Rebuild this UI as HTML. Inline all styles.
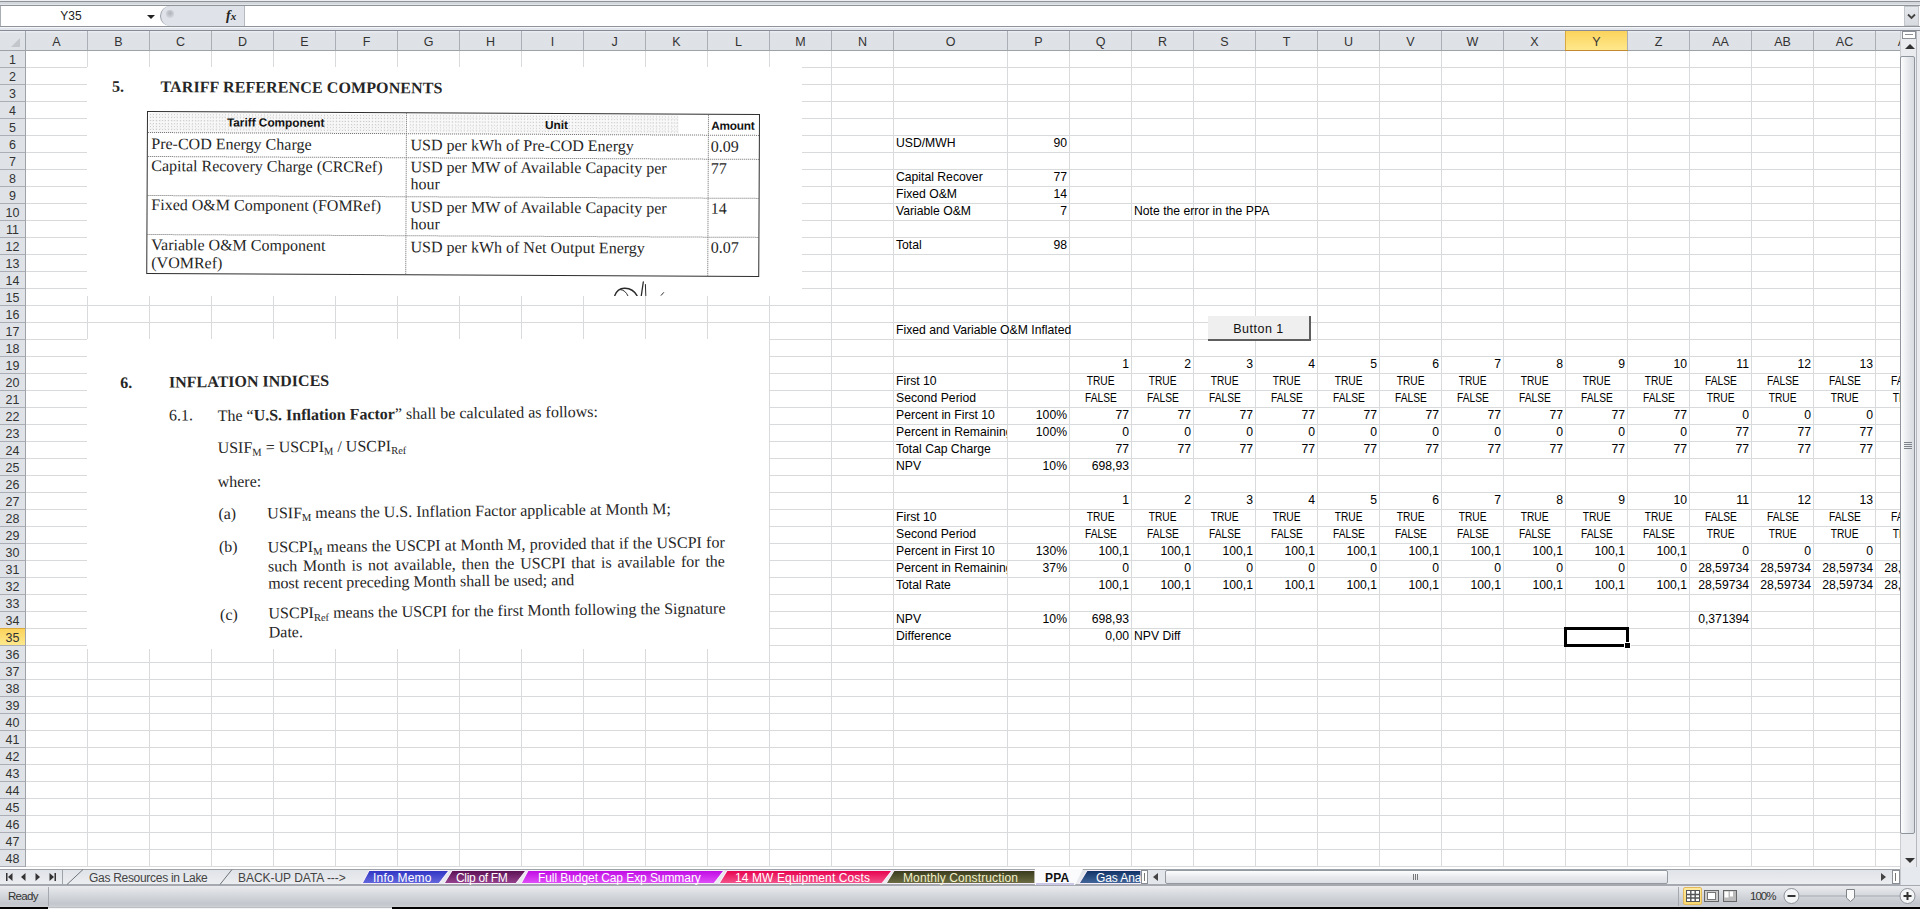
<!DOCTYPE html><html><head><meta charset="utf-8"><style>
*{margin:0;padding:0;box-sizing:border-box}
html,body{width:1920px;height:909px;overflow:hidden;background:#fff;font-family:"Liberation Sans", sans-serif;position:relative}
.a{position:absolute}
.c{position:absolute;height:16px;line-height:16px;font-size:12.2px;color:#000;white-space:nowrap;overflow:hidden}
.r{text-align:right;padding-right:2px}
.l{text-align:left;padding-left:2px}
.m{text-align:center}
.hd{position:absolute;font-size:12.5px;color:#333;text-align:center;line-height:19px;top:33px;height:17px;overflow:visible}
.rh{position:absolute;left:0;width:25px;font-size:12.5px;color:#333;text-align:center;line-height:17px;height:16px}


.doc{position:absolute;background:#fff;overflow:hidden}
.rot{position:absolute;left:0;top:0;width:1920px;height:909px}
.t{position:absolute;white-space:nowrap;font-family:'Liberation Serif',serif;font-size:16px;color:#262626;line-height:18px}
.b{font-weight:bold}
.tb{position:absolute;white-space:nowrap;font-family:'Liberation Sans',sans-serif;font-size:11.8px;font-weight:bold;color:#111;line-height:14px}
sub.s{font-size:10.5px;vertical-align:baseline;position:relative;top:3px}
.cp{display:inline-block;transform:scaleX(.84);transform-origin:50% 50%}


.tt{position:absolute;top:870px;height:16px;line-height:17px;font-size:12px;white-space:nowrap;color:#444}
</style></head><body><div class="a" style="left:0;top:0;width:1920px;height:31px;background:#e6e9ed"></div>
<div class="a" style="left:0;top:0;width:1920px;height:1px;background:#eceef1"></div>
<div class="a" style="left:0;top:1px;width:1920px;height:1px;background:#8e9399"></div>
<div class="a" style="left:0;top:2px;width:1920px;height:2px;background:#d4d7db"></div>
<div class="a" style="left:0;top:4px;width:1920px;height:1px;background:#e3e6e9"></div>
<div class="a" style="left:0;top:5px;width:1920px;height:1px;background:#8f949a"></div>
<div class="a" style="left:0;top:6px;width:1920px;height:20px;background:#fff"></div>
<div class="a" style="left:0;top:26px;width:1920px;height:1px;background:#8f949a"></div>
<div class="a" style="left:0;top:27px;width:1920px;height:1px;background:#f5f6f8"></div>
<div class="a" style="left:0;top:28px;width:1920px;height:2px;background:#e2e5ec"></div>
<div class="a" style="left:0;top:30px;width:1920px;height:1px;background:#878c94"></div>
<div class="a" style="left:0;top:6px;width:1px;height:20px;background:#a9aeb4"></div>
<div class="a" style="left:0;top:6px;width:160px;height:20px;line-height:20px;font-size:12px;color:#222;text-align:center;padding-right:18px">Y35</div>
<div class="a" style="left:147px;top:15px;width:0;height:0;border-left:4px solid transparent;border-right:4px solid transparent;border-top:4px solid #222"></div>
<div class="a" style="left:160px;top:6px;width:85px;height:20px;background:#dfe2e8;border-radius:10px 0 0 10px;border-left:1px solid #9aa0a8"></div>
<div class="a" style="left:244px;top:6px;width:1px;height:20px;background:#b5bac1"></div>
<div class="a" style="left:166px;top:10px;width:8px;height:8px;border-radius:50%;background:radial-gradient(circle at 50% 40%,#b0b4ba,#dfe2e8)"></div>
<div class="a" style="left:226px;top:6px;height:20px;line-height:20px;font-family:'Liberation Serif',serif;font-style:italic;font-weight:bold;font-size:14px;color:#222">f<span style="font-size:11px">x</span></div>
<div class="a" style="left:1904px;top:6px;width:15px;height:20px;background:linear-gradient(#e4e7eb,#d8dbe0);border:1px solid #c3c7cc"></div>
<svg class="a" style="left:1905px;top:6px" width="13" height="20"><path d="M3 8.5 L6.5 12 L10 8.5" stroke="#444" stroke-width="1.8" fill="none"/></svg>
<div class="a" style="left:0;top:31px;width:1900px;height:19px;background:linear-gradient(#e9ecf0 0,#e9ecf0 1px,#dfe2e7 2px,#dee1e6)"></div>
<div class="a" style="left:0;top:50px;width:1900px;height:1px;background:#9ea3aa"></div>
<div class="a" style="left:11px;top:38px;width:0;height:0;border-left:9px solid transparent;border-bottom:9px solid #c3c7cc"></div>
<div class="hd" style="left:26px;width:61px;">A</div>
<div class="a" style="left:25px;top:31px;width:1px;height:19px;background:#abafb5"></div>
<div class="a" style="left:87px;top:31px;width:1px;height:19px;background:#abafb5"></div>
<div class="hd" style="left:88px;width:61px;">B</div>
<div class="a" style="left:87px;top:31px;width:1px;height:19px;background:#abafb5"></div>
<div class="a" style="left:149px;top:31px;width:1px;height:19px;background:#abafb5"></div>
<div class="hd" style="left:150px;width:61px;">C</div>
<div class="a" style="left:149px;top:31px;width:1px;height:19px;background:#abafb5"></div>
<div class="a" style="left:211px;top:31px;width:1px;height:19px;background:#abafb5"></div>
<div class="hd" style="left:212px;width:61px;">D</div>
<div class="a" style="left:211px;top:31px;width:1px;height:19px;background:#abafb5"></div>
<div class="a" style="left:273px;top:31px;width:1px;height:19px;background:#abafb5"></div>
<div class="hd" style="left:274px;width:61px;">E</div>
<div class="a" style="left:273px;top:31px;width:1px;height:19px;background:#abafb5"></div>
<div class="a" style="left:335px;top:31px;width:1px;height:19px;background:#abafb5"></div>
<div class="hd" style="left:336px;width:61px;">F</div>
<div class="a" style="left:335px;top:31px;width:1px;height:19px;background:#abafb5"></div>
<div class="a" style="left:397px;top:31px;width:1px;height:19px;background:#abafb5"></div>
<div class="hd" style="left:398px;width:61px;">G</div>
<div class="a" style="left:397px;top:31px;width:1px;height:19px;background:#abafb5"></div>
<div class="a" style="left:459px;top:31px;width:1px;height:19px;background:#abafb5"></div>
<div class="hd" style="left:460px;width:61px;">H</div>
<div class="a" style="left:459px;top:31px;width:1px;height:19px;background:#abafb5"></div>
<div class="a" style="left:521px;top:31px;width:1px;height:19px;background:#abafb5"></div>
<div class="hd" style="left:522px;width:61px;">I</div>
<div class="a" style="left:521px;top:31px;width:1px;height:19px;background:#abafb5"></div>
<div class="a" style="left:583px;top:31px;width:1px;height:19px;background:#abafb5"></div>
<div class="hd" style="left:584px;width:61px;">J</div>
<div class="a" style="left:583px;top:31px;width:1px;height:19px;background:#abafb5"></div>
<div class="a" style="left:645px;top:31px;width:1px;height:19px;background:#abafb5"></div>
<div class="hd" style="left:646px;width:61px;">K</div>
<div class="a" style="left:645px;top:31px;width:1px;height:19px;background:#abafb5"></div>
<div class="a" style="left:707px;top:31px;width:1px;height:19px;background:#abafb5"></div>
<div class="hd" style="left:708px;width:61px;">L</div>
<div class="a" style="left:707px;top:31px;width:1px;height:19px;background:#abafb5"></div>
<div class="a" style="left:769px;top:31px;width:1px;height:19px;background:#abafb5"></div>
<div class="hd" style="left:770px;width:61px;">M</div>
<div class="a" style="left:769px;top:31px;width:1px;height:19px;background:#abafb5"></div>
<div class="a" style="left:831px;top:31px;width:1px;height:19px;background:#abafb5"></div>
<div class="hd" style="left:832px;width:61px;">N</div>
<div class="a" style="left:831px;top:31px;width:1px;height:19px;background:#abafb5"></div>
<div class="a" style="left:893px;top:31px;width:1px;height:19px;background:#abafb5"></div>
<div class="hd" style="left:894px;width:113px;">O</div>
<div class="a" style="left:893px;top:31px;width:1px;height:19px;background:#abafb5"></div>
<div class="a" style="left:1007px;top:31px;width:1px;height:19px;background:#abafb5"></div>
<div class="hd" style="left:1008px;width:61px;">P</div>
<div class="a" style="left:1007px;top:31px;width:1px;height:19px;background:#abafb5"></div>
<div class="a" style="left:1069px;top:31px;width:1px;height:19px;background:#abafb5"></div>
<div class="hd" style="left:1070px;width:61px;">Q</div>
<div class="a" style="left:1069px;top:31px;width:1px;height:19px;background:#abafb5"></div>
<div class="a" style="left:1131px;top:31px;width:1px;height:19px;background:#abafb5"></div>
<div class="hd" style="left:1132px;width:61px;">R</div>
<div class="a" style="left:1131px;top:31px;width:1px;height:19px;background:#abafb5"></div>
<div class="a" style="left:1193px;top:31px;width:1px;height:19px;background:#abafb5"></div>
<div class="hd" style="left:1194px;width:61px;">S</div>
<div class="a" style="left:1193px;top:31px;width:1px;height:19px;background:#abafb5"></div>
<div class="a" style="left:1255px;top:31px;width:1px;height:19px;background:#abafb5"></div>
<div class="hd" style="left:1256px;width:61px;">T</div>
<div class="a" style="left:1255px;top:31px;width:1px;height:19px;background:#abafb5"></div>
<div class="a" style="left:1317px;top:31px;width:1px;height:19px;background:#abafb5"></div>
<div class="hd" style="left:1318px;width:61px;">U</div>
<div class="a" style="left:1317px;top:31px;width:1px;height:19px;background:#abafb5"></div>
<div class="a" style="left:1379px;top:31px;width:1px;height:19px;background:#abafb5"></div>
<div class="hd" style="left:1380px;width:61px;">V</div>
<div class="a" style="left:1379px;top:31px;width:1px;height:19px;background:#abafb5"></div>
<div class="a" style="left:1441px;top:31px;width:1px;height:19px;background:#abafb5"></div>
<div class="hd" style="left:1442px;width:61px;">W</div>
<div class="a" style="left:1441px;top:31px;width:1px;height:19px;background:#abafb5"></div>
<div class="a" style="left:1503px;top:31px;width:1px;height:19px;background:#abafb5"></div>
<div class="hd" style="left:1504px;width:61px;">X</div>
<div class="a" style="left:1503px;top:31px;width:1px;height:19px;background:#abafb5"></div>
<div class="a" style="left:1565px;top:31px;width:1px;height:19px;background:#abafb5"></div>
<div class="a" style="left:1566px;top:31px;width:61px;height:19px;background:linear-gradient(#fbd35c,#fee88c)"></div>
<div class="hd" style="left:1566px;width:61px;">Y</div>
<div class="a" style="left:1565px;top:31px;width:1px;height:19px;background:#d9a93e"></div>
<div class="a" style="left:1627px;top:31px;width:1px;height:19px;background:#d9a93e"></div>
<div class="hd" style="left:1628px;width:61px;">Z</div>
<div class="a" style="left:1627px;top:31px;width:1px;height:19px;background:#abafb5"></div>
<div class="a" style="left:1689px;top:31px;width:1px;height:19px;background:#abafb5"></div>
<div class="hd" style="left:1690px;width:61px;">AA</div>
<div class="a" style="left:1689px;top:31px;width:1px;height:19px;background:#abafb5"></div>
<div class="a" style="left:1751px;top:31px;width:1px;height:19px;background:#abafb5"></div>
<div class="hd" style="left:1752px;width:61px;">AB</div>
<div class="a" style="left:1751px;top:31px;width:1px;height:19px;background:#abafb5"></div>
<div class="a" style="left:1813px;top:31px;width:1px;height:19px;background:#abafb5"></div>
<div class="hd" style="left:1814px;width:61px;">AC</div>
<div class="a" style="left:1813px;top:31px;width:1px;height:19px;background:#abafb5"></div>
<div class="a" style="left:1875px;top:31px;width:1px;height:19px;background:#abafb5"></div>
<div class="hd" style="left:1876px;width:61px;clip-path:inset(0 37px 0 0)">AD</div>
<div class="a" style="left:1875px;top:31px;width:1px;height:19px;background:#abafb5"></div>
<div class="a" style="left:1565px;top:50px;width:63px;height:1px;background:#c28a30"></div>
<div class="a" style="left:0;top:51px;width:25px;height:816px;background:#dfe3e8"></div>
<div class="a" style="left:25px;top:31px;width:1px;height:836px;background:#9ea3aa"></div>
<div class="rh" style="top:52px">1</div>
<div class="a" style="left:0;top:67px;width:25px;height:1px;background:#abafb5"></div>
<div class="rh" style="top:69px">2</div>
<div class="a" style="left:0;top:84px;width:25px;height:1px;background:#abafb5"></div>
<div class="rh" style="top:86px">3</div>
<div class="a" style="left:0;top:101px;width:25px;height:1px;background:#abafb5"></div>
<div class="rh" style="top:103px">4</div>
<div class="a" style="left:0;top:118px;width:25px;height:1px;background:#abafb5"></div>
<div class="rh" style="top:120px">5</div>
<div class="a" style="left:0;top:135px;width:25px;height:1px;background:#abafb5"></div>
<div class="rh" style="top:137px">6</div>
<div class="a" style="left:0;top:152px;width:25px;height:1px;background:#abafb5"></div>
<div class="rh" style="top:154px">7</div>
<div class="a" style="left:0;top:169px;width:25px;height:1px;background:#abafb5"></div>
<div class="rh" style="top:171px">8</div>
<div class="a" style="left:0;top:186px;width:25px;height:1px;background:#abafb5"></div>
<div class="rh" style="top:188px">9</div>
<div class="a" style="left:0;top:203px;width:25px;height:1px;background:#abafb5"></div>
<div class="rh" style="top:205px">10</div>
<div class="a" style="left:0;top:220px;width:25px;height:1px;background:#abafb5"></div>
<div class="rh" style="top:222px">11</div>
<div class="a" style="left:0;top:237px;width:25px;height:1px;background:#abafb5"></div>
<div class="rh" style="top:239px">12</div>
<div class="a" style="left:0;top:254px;width:25px;height:1px;background:#abafb5"></div>
<div class="rh" style="top:256px">13</div>
<div class="a" style="left:0;top:271px;width:25px;height:1px;background:#abafb5"></div>
<div class="rh" style="top:273px">14</div>
<div class="a" style="left:0;top:288px;width:25px;height:1px;background:#abafb5"></div>
<div class="rh" style="top:290px">15</div>
<div class="a" style="left:0;top:305px;width:25px;height:1px;background:#abafb5"></div>
<div class="rh" style="top:307px">16</div>
<div class="a" style="left:0;top:322px;width:25px;height:1px;background:#abafb5"></div>
<div class="rh" style="top:324px">17</div>
<div class="a" style="left:0;top:339px;width:25px;height:1px;background:#abafb5"></div>
<div class="rh" style="top:341px">18</div>
<div class="a" style="left:0;top:356px;width:25px;height:1px;background:#abafb5"></div>
<div class="rh" style="top:358px">19</div>
<div class="a" style="left:0;top:373px;width:25px;height:1px;background:#abafb5"></div>
<div class="rh" style="top:375px">20</div>
<div class="a" style="left:0;top:390px;width:25px;height:1px;background:#abafb5"></div>
<div class="rh" style="top:392px">21</div>
<div class="a" style="left:0;top:407px;width:25px;height:1px;background:#abafb5"></div>
<div class="rh" style="top:409px">22</div>
<div class="a" style="left:0;top:424px;width:25px;height:1px;background:#abafb5"></div>
<div class="rh" style="top:426px">23</div>
<div class="a" style="left:0;top:441px;width:25px;height:1px;background:#abafb5"></div>
<div class="rh" style="top:443px">24</div>
<div class="a" style="left:0;top:458px;width:25px;height:1px;background:#abafb5"></div>
<div class="rh" style="top:460px">25</div>
<div class="a" style="left:0;top:475px;width:25px;height:1px;background:#abafb5"></div>
<div class="rh" style="top:477px">26</div>
<div class="a" style="left:0;top:492px;width:25px;height:1px;background:#abafb5"></div>
<div class="rh" style="top:494px">27</div>
<div class="a" style="left:0;top:509px;width:25px;height:1px;background:#abafb5"></div>
<div class="rh" style="top:511px">28</div>
<div class="a" style="left:0;top:526px;width:25px;height:1px;background:#abafb5"></div>
<div class="rh" style="top:528px">29</div>
<div class="a" style="left:0;top:543px;width:25px;height:1px;background:#abafb5"></div>
<div class="rh" style="top:545px">30</div>
<div class="a" style="left:0;top:560px;width:25px;height:1px;background:#abafb5"></div>
<div class="rh" style="top:562px">31</div>
<div class="a" style="left:0;top:577px;width:25px;height:1px;background:#abafb5"></div>
<div class="rh" style="top:579px">32</div>
<div class="a" style="left:0;top:594px;width:25px;height:1px;background:#abafb5"></div>
<div class="rh" style="top:596px">33</div>
<div class="a" style="left:0;top:611px;width:25px;height:1px;background:#abafb5"></div>
<div class="rh" style="top:613px">34</div>
<div class="a" style="left:0;top:628px;width:25px;height:1px;background:#abafb5"></div>
<div class="a" style="left:0;top:628px;width:25px;height:18px;background:linear-gradient(#fbd35c,#fee88c);border-top:1px solid #d9a93e;border-bottom:1px solid #d9a93e"></div>
<div class="rh" style="top:630px">35</div>
<div class="a" style="left:0;top:645px;width:25px;height:1px;background:#abafb5"></div>
<div class="rh" style="top:647px">36</div>
<div class="a" style="left:0;top:662px;width:25px;height:1px;background:#abafb5"></div>
<div class="rh" style="top:664px">37</div>
<div class="a" style="left:0;top:679px;width:25px;height:1px;background:#abafb5"></div>
<div class="rh" style="top:681px">38</div>
<div class="a" style="left:0;top:696px;width:25px;height:1px;background:#abafb5"></div>
<div class="rh" style="top:698px">39</div>
<div class="a" style="left:0;top:713px;width:25px;height:1px;background:#abafb5"></div>
<div class="rh" style="top:715px">40</div>
<div class="a" style="left:0;top:730px;width:25px;height:1px;background:#abafb5"></div>
<div class="rh" style="top:732px">41</div>
<div class="a" style="left:0;top:747px;width:25px;height:1px;background:#abafb5"></div>
<div class="rh" style="top:749px">42</div>
<div class="a" style="left:0;top:764px;width:25px;height:1px;background:#abafb5"></div>
<div class="rh" style="top:766px">43</div>
<div class="a" style="left:0;top:781px;width:25px;height:1px;background:#abafb5"></div>
<div class="rh" style="top:783px">44</div>
<div class="a" style="left:0;top:798px;width:25px;height:1px;background:#abafb5"></div>
<div class="rh" style="top:800px">45</div>
<div class="a" style="left:0;top:815px;width:25px;height:1px;background:#abafb5"></div>
<div class="rh" style="top:817px">46</div>
<div class="a" style="left:0;top:832px;width:25px;height:1px;background:#abafb5"></div>
<div class="rh" style="top:834px">47</div>
<div class="a" style="left:0;top:849px;width:25px;height:1px;background:#abafb5"></div>
<div class="rh" style="top:851px">48</div>
<div class="a" style="left:0;top:866px;width:25px;height:1px;background:#abafb5"></div>
<div class="a" style="left:26px;top:67px;width:1874px;height:1px;background:#d9dadb"></div>
<div class="a" style="left:26px;top:84px;width:1874px;height:1px;background:#d9dadb"></div>
<div class="a" style="left:26px;top:101px;width:1874px;height:1px;background:#d9dadb"></div>
<div class="a" style="left:26px;top:118px;width:1874px;height:1px;background:#d9dadb"></div>
<div class="a" style="left:26px;top:135px;width:1874px;height:1px;background:#d9dadb"></div>
<div class="a" style="left:26px;top:152px;width:1874px;height:1px;background:#d9dadb"></div>
<div class="a" style="left:26px;top:169px;width:1874px;height:1px;background:#d9dadb"></div>
<div class="a" style="left:26px;top:186px;width:1874px;height:1px;background:#d9dadb"></div>
<div class="a" style="left:26px;top:203px;width:1874px;height:1px;background:#d9dadb"></div>
<div class="a" style="left:26px;top:220px;width:1874px;height:1px;background:#d9dadb"></div>
<div class="a" style="left:26px;top:237px;width:1874px;height:1px;background:#d9dadb"></div>
<div class="a" style="left:26px;top:254px;width:1874px;height:1px;background:#d9dadb"></div>
<div class="a" style="left:26px;top:271px;width:1874px;height:1px;background:#d9dadb"></div>
<div class="a" style="left:26px;top:288px;width:1874px;height:1px;background:#d9dadb"></div>
<div class="a" style="left:26px;top:305px;width:1874px;height:1px;background:#d9dadb"></div>
<div class="a" style="left:26px;top:322px;width:1874px;height:1px;background:#d9dadb"></div>
<div class="a" style="left:26px;top:339px;width:1874px;height:1px;background:#d9dadb"></div>
<div class="a" style="left:26px;top:356px;width:1874px;height:1px;background:#d9dadb"></div>
<div class="a" style="left:26px;top:373px;width:1874px;height:1px;background:#d9dadb"></div>
<div class="a" style="left:26px;top:390px;width:1874px;height:1px;background:#d9dadb"></div>
<div class="a" style="left:26px;top:407px;width:1874px;height:1px;background:#d9dadb"></div>
<div class="a" style="left:26px;top:424px;width:1874px;height:1px;background:#d9dadb"></div>
<div class="a" style="left:26px;top:441px;width:1874px;height:1px;background:#d9dadb"></div>
<div class="a" style="left:26px;top:458px;width:1874px;height:1px;background:#d9dadb"></div>
<div class="a" style="left:26px;top:475px;width:1874px;height:1px;background:#d9dadb"></div>
<div class="a" style="left:26px;top:492px;width:1874px;height:1px;background:#d9dadb"></div>
<div class="a" style="left:26px;top:509px;width:1874px;height:1px;background:#d9dadb"></div>
<div class="a" style="left:26px;top:526px;width:1874px;height:1px;background:#d9dadb"></div>
<div class="a" style="left:26px;top:543px;width:1874px;height:1px;background:#d9dadb"></div>
<div class="a" style="left:26px;top:560px;width:1874px;height:1px;background:#d9dadb"></div>
<div class="a" style="left:26px;top:577px;width:1874px;height:1px;background:#d9dadb"></div>
<div class="a" style="left:26px;top:594px;width:1874px;height:1px;background:#d9dadb"></div>
<div class="a" style="left:26px;top:611px;width:1874px;height:1px;background:#d9dadb"></div>
<div class="a" style="left:26px;top:628px;width:1874px;height:1px;background:#d9dadb"></div>
<div class="a" style="left:26px;top:645px;width:1874px;height:1px;background:#d9dadb"></div>
<div class="a" style="left:26px;top:662px;width:1874px;height:1px;background:#d9dadb"></div>
<div class="a" style="left:26px;top:679px;width:1874px;height:1px;background:#d9dadb"></div>
<div class="a" style="left:26px;top:696px;width:1874px;height:1px;background:#d9dadb"></div>
<div class="a" style="left:26px;top:713px;width:1874px;height:1px;background:#d9dadb"></div>
<div class="a" style="left:26px;top:730px;width:1874px;height:1px;background:#d9dadb"></div>
<div class="a" style="left:26px;top:747px;width:1874px;height:1px;background:#d9dadb"></div>
<div class="a" style="left:26px;top:764px;width:1874px;height:1px;background:#d9dadb"></div>
<div class="a" style="left:26px;top:781px;width:1874px;height:1px;background:#d9dadb"></div>
<div class="a" style="left:26px;top:798px;width:1874px;height:1px;background:#d9dadb"></div>
<div class="a" style="left:26px;top:815px;width:1874px;height:1px;background:#d9dadb"></div>
<div class="a" style="left:26px;top:832px;width:1874px;height:1px;background:#d9dadb"></div>
<div class="a" style="left:26px;top:849px;width:1874px;height:1px;background:#d9dadb"></div>
<div class="a" style="left:26px;top:866px;width:1874px;height:1px;background:#d9dadb"></div>
<div class="a" style="left:87px;top:51px;width:1px;height:816px;background:#d9dadb"></div>
<div class="a" style="left:149px;top:51px;width:1px;height:816px;background:#d9dadb"></div>
<div class="a" style="left:211px;top:51px;width:1px;height:816px;background:#d9dadb"></div>
<div class="a" style="left:273px;top:51px;width:1px;height:816px;background:#d9dadb"></div>
<div class="a" style="left:335px;top:51px;width:1px;height:816px;background:#d9dadb"></div>
<div class="a" style="left:397px;top:51px;width:1px;height:816px;background:#d9dadb"></div>
<div class="a" style="left:459px;top:51px;width:1px;height:816px;background:#d9dadb"></div>
<div class="a" style="left:521px;top:51px;width:1px;height:816px;background:#d9dadb"></div>
<div class="a" style="left:583px;top:51px;width:1px;height:816px;background:#d9dadb"></div>
<div class="a" style="left:645px;top:51px;width:1px;height:816px;background:#d9dadb"></div>
<div class="a" style="left:707px;top:51px;width:1px;height:816px;background:#d9dadb"></div>
<div class="a" style="left:769px;top:51px;width:1px;height:816px;background:#d9dadb"></div>
<div class="a" style="left:831px;top:51px;width:1px;height:816px;background:#d9dadb"></div>
<div class="a" style="left:893px;top:51px;width:1px;height:816px;background:#d9dadb"></div>
<div class="a" style="left:1007px;top:51px;width:1px;height:816px;background:#d9dadb"></div>
<div class="a" style="left:1069px;top:51px;width:1px;height:816px;background:#d9dadb"></div>
<div class="a" style="left:1131px;top:51px;width:1px;height:816px;background:#d9dadb"></div>
<div class="a" style="left:1193px;top:51px;width:1px;height:816px;background:#d9dadb"></div>
<div class="a" style="left:1255px;top:51px;width:1px;height:816px;background:#d9dadb"></div>
<div class="a" style="left:1317px;top:51px;width:1px;height:816px;background:#d9dadb"></div>
<div class="a" style="left:1379px;top:51px;width:1px;height:816px;background:#d9dadb"></div>
<div class="a" style="left:1441px;top:51px;width:1px;height:816px;background:#d9dadb"></div>
<div class="a" style="left:1503px;top:51px;width:1px;height:816px;background:#d9dadb"></div>
<div class="a" style="left:1565px;top:51px;width:1px;height:816px;background:#d9dadb"></div>
<div class="a" style="left:1627px;top:51px;width:1px;height:816px;background:#d9dadb"></div>
<div class="a" style="left:1689px;top:51px;width:1px;height:816px;background:#d9dadb"></div>
<div class="a" style="left:1751px;top:51px;width:1px;height:816px;background:#d9dadb"></div>
<div class="a" style="left:1813px;top:51px;width:1px;height:816px;background:#d9dadb"></div>
<div class="a" style="left:1875px;top:51px;width:1px;height:816px;background:#d9dadb"></div>
<div class="doc" style="left:87px;top:67px;width:715px;height:229px"></div>
<div class="rot" style="transform-origin:146.6px 111.0px;transform:rotate(0.27deg)">
<div class="t b" style="left:111.89px;top:77.86px;">5.</div>
<div class="t b" style="left:160.39px;top:77.63px;letter-spacing:0.11px">TARIFF REFERENCE COMPONENTS</div>
<div class="a" style="left:148.6px;top:113.0px;width:256px;height:19px;background:radial-gradient(circle,#c8c8c8 0 0.7px,transparent 0.9px) 0 0/3px 3px,radial-gradient(circle,#dcdcdc 0 0.6px,transparent 0.8px) 1.5px 1.5px/4px 4px,#f8f8f8"></div>
<div class="a" style="left:408.6px;top:113.0px;width:270px;height:19px;background:radial-gradient(circle,#cccccc 0 0.7px,transparent 0.9px) 0 0/3px 3px,radial-gradient(circle,#dddddd 0 0.6px,transparent 0.8px) 1.5px 1.5px/4px 4px,#f9f9f9"></div>
<div class="a" style="left:146.6px;top:111.0px;width:613.5px;height:162.7px;border:1.6px solid #2e2e2e"></div>
<div class="a" style="left:147.6px;top:132.4px;width:611.5px;height:0;border-top:1px dotted #6a6a6a"></div>
<div class="a" style="left:147.6px;top:155.5px;width:611.5px;height:0;border-top:1px dotted #6a6a6a"></div>
<div class="a" style="left:147.6px;top:195.0px;width:611.5px;height:0;border-top:1px dotted #6a6a6a"></div>
<div class="a" style="left:147.6px;top:234.1px;width:611.5px;height:0;border-top:1px dotted #6a6a6a"></div>
<div class="a" style="left:406.0px;top:112.0px;width:0;height:160.7px;border-left:1px dotted #6a6a6a"></div>
<div class="a" style="left:707.6px;top:112.0px;width:0;height:160.7px;border-left:1px dotted #6a6a6a"></div>
<div class="tb" style="left:227.05px;top:115.12px;">Tariff Component</div>
<div class="tb" style="left:545.06px;top:115.62px;">Unit</div>
<div class="tb" style="left:711.26px;top:115.74px;letter-spacing:-0.2px">Amount</div>
<div class="t" style="left:151.46px;top:135.08px;">Pre-COD Energy Charge</div>
<div class="t" style="left:410.66px;top:135.46px;">USD per kWh of Pre-COD Energy</div>
<div class="t" style="left:710.96px;top:134.74px;">0.09</div>
<div class="t" style="left:151.56px;top:156.78px;">Capital Recovery Charge (CRCRef)</div>
<div class="t" style="left:410.76px;top:157.46px;">USD per MW of Available Capacity per</div>
<div class="t" style="left:410.84px;top:173.96px;">hour</div>
<div class="t" style="left:711.06px;top:156.64px;">77</div>
<div class="t" style="left:151.75px;top:196.38px;">Fixed O&amp;M Component (FOMRef)</div>
<div class="t" style="left:410.95px;top:196.76px;">USD per MW of Available Capacity per</div>
<div class="t" style="left:411.03px;top:214.16px;">hour</div>
<div class="t" style="left:711.25px;top:196.54px;">14</div>
<div class="t" style="left:151.93px;top:235.88px;">Variable O&amp;M Component</div>
<div class="t" style="left:152.02px;top:253.88px;">(VOMRef)</div>
<div class="t" style="left:411.14px;top:236.65px;">USD per kWh of Net Output Energy</div>
<div class="t" style="left:711.44px;top:236.34px;">0.07</div>
</div>
<svg class="a" style="left:600px;top:276px" width="80" height="20"><g fill="none" stroke="#2a2a2a" stroke-linecap="round"><path d="M14.8 19.6 C17 13.5 21 12 25 12.2 C30 12.4 34.5 15 37 19.6" stroke-width="1.4"/><path d="M20.5 13.6 C24 14 26.2 16.2 27.8 19.6" stroke-width="1"/><path d="M41.3 19.6 L43.3 6" stroke-width="1.3"/><path d="M45.4 8.5 L45.8 19.6" stroke-width="1"/><path d="M61.2 19.3 L63.6 16.6" stroke-width="1"/></g></svg>
<div class="doc" style="left:87px;top:339px;width:682px;height:310px"></div>
<div class="rot" style="left:-1px;transform-origin:220.0px 520.0px;transform:rotate(-0.63deg)">
<div class="t b" style="left:122.71px;top:373.32px;">6.</div>
<div class="t b" style="left:171.51px;top:373.36px;">INFLATION INDICES</div>
<div class="t" style="left:171.15px;top:406.16px;">6.1.</div>
<div class="t" style="left:219.75px;top:406.69px;">The “<b>U.S. Inflation Factor</b>” shall be calculated as follows:</div>
<div class="t" style="left:219.39px;top:439.39px;">USIF<sub class="s">M</sub> = USCPI<sub class="s">M</sub> / USCPI<sub class="s">Ref</sub></div>
<div class="t" style="left:219.02px;top:472.59px;">where:</div>
<div class="t" style="left:219.46px;top:505.39px;">(a)</div>
<div class="t" style="left:268.36px;top:505.43px;">USIF<sub class="s">M</sub> means the U.S. Inflation Factor applicable at Month M;</div>
<div class="t" style="left:219.70px;top:538.40px;">(b)</div>
<div class="t" style="left:268.40px;top:538.73px;width:457px;white-space:normal;text-align:justify;text-align-last:left;line-height:17.2px">USCPI<sub class="s">M</sub> means the USCPI at Month M, provided that if the USCPI for such Month is not available, then the USCPI that is available for the most recent preceding Month shall be used; and</div>
<div class="t" style="left:219.96px;top:605.91px;">(c)</div>
<div class="t" style="left:268.45px;top:606.34px;width:457px;white-space:normal;text-align:justify;text-align-last:left;line-height:16.8px">USCPI<sub class="s">Ref</sub> means the USCPI for the first Month following the Signature Date.</div>
</div>
<div class="c l" style="left:894px;top:135px;width:113px">USD/MWH</div>
<div class="c r" style="left:1008px;top:135px;width:61px">90</div>
<div class="c l" style="left:894px;top:169px;width:113px">Capital Recover</div>
<div class="c r" style="left:1008px;top:169px;width:61px">77</div>
<div class="c l" style="left:894px;top:186px;width:113px">Fixed O&amp;M</div>
<div class="c r" style="left:1008px;top:186px;width:61px">14</div>
<div class="c l" style="left:894px;top:203px;width:113px">Variable O&amp;M</div>
<div class="c r" style="left:1008px;top:203px;width:61px">7</div>
<div class="c l" style="left:1132px;top:203px;overflow:visible">Note the error in the PPA</div>
<div class="c l" style="left:894px;top:237px;width:113px">Total</div>
<div class="c r" style="left:1008px;top:237px;width:61px">98</div>
<div class="c l" style="left:894px;top:322px;overflow:visible">Fixed and Variable O&amp;M Inflated</div>
<div class="c r" style="left:1070px;top:356px;width:61px">1</div>
<div class="c r" style="left:1132px;top:356px;width:61px">2</div>
<div class="c r" style="left:1194px;top:356px;width:61px">3</div>
<div class="c r" style="left:1256px;top:356px;width:61px">4</div>
<div class="c r" style="left:1318px;top:356px;width:61px">5</div>
<div class="c r" style="left:1380px;top:356px;width:61px">6</div>
<div class="c r" style="left:1442px;top:356px;width:61px">7</div>
<div class="c r" style="left:1504px;top:356px;width:61px">8</div>
<div class="c r" style="left:1566px;top:356px;width:61px">9</div>
<div class="c r" style="left:1628px;top:356px;width:61px">10</div>
<div class="c r" style="left:1690px;top:356px;width:61px">11</div>
<div class="c r" style="left:1752px;top:356px;width:61px">12</div>
<div class="c r" style="left:1814px;top:356px;width:61px">13</div>
<div class="c l" style="left:894px;top:373px;width:113px">First 10</div>
<div class="c l" style="left:894px;top:390px;width:113px">Second Period</div>
<div class="c m" style="left:1070px;top:373px;width:61px"><span class="cp">TRUE</span></div>
<div class="c m" style="left:1070px;top:390px;width:61px"><span class="cp">FALSE</span></div>
<div class="c m" style="left:1132px;top:373px;width:61px"><span class="cp">TRUE</span></div>
<div class="c m" style="left:1132px;top:390px;width:61px"><span class="cp">FALSE</span></div>
<div class="c m" style="left:1194px;top:373px;width:61px"><span class="cp">TRUE</span></div>
<div class="c m" style="left:1194px;top:390px;width:61px"><span class="cp">FALSE</span></div>
<div class="c m" style="left:1256px;top:373px;width:61px"><span class="cp">TRUE</span></div>
<div class="c m" style="left:1256px;top:390px;width:61px"><span class="cp">FALSE</span></div>
<div class="c m" style="left:1318px;top:373px;width:61px"><span class="cp">TRUE</span></div>
<div class="c m" style="left:1318px;top:390px;width:61px"><span class="cp">FALSE</span></div>
<div class="c m" style="left:1380px;top:373px;width:61px"><span class="cp">TRUE</span></div>
<div class="c m" style="left:1380px;top:390px;width:61px"><span class="cp">FALSE</span></div>
<div class="c m" style="left:1442px;top:373px;width:61px"><span class="cp">TRUE</span></div>
<div class="c m" style="left:1442px;top:390px;width:61px"><span class="cp">FALSE</span></div>
<div class="c m" style="left:1504px;top:373px;width:61px"><span class="cp">TRUE</span></div>
<div class="c m" style="left:1504px;top:390px;width:61px"><span class="cp">FALSE</span></div>
<div class="c m" style="left:1566px;top:373px;width:61px"><span class="cp">TRUE</span></div>
<div class="c m" style="left:1566px;top:390px;width:61px"><span class="cp">FALSE</span></div>
<div class="c m" style="left:1628px;top:373px;width:61px"><span class="cp">TRUE</span></div>
<div class="c m" style="left:1628px;top:390px;width:61px"><span class="cp">FALSE</span></div>
<div class="c m" style="left:1690px;top:373px;width:61px"><span class="cp">FALSE</span></div>
<div class="c m" style="left:1690px;top:390px;width:61px"><span class="cp">TRUE</span></div>
<div class="c m" style="left:1752px;top:373px;width:61px"><span class="cp">FALSE</span></div>
<div class="c m" style="left:1752px;top:390px;width:61px"><span class="cp">TRUE</span></div>
<div class="c m" style="left:1814px;top:373px;width:61px"><span class="cp">FALSE</span></div>
<div class="c m" style="left:1814px;top:390px;width:61px"><span class="cp">TRUE</span></div>
<div class="c m" style="left:1876px;top:373px;width:61px"><span class="cp">FALSE</span></div>
<div class="c m" style="left:1876px;top:390px;width:61px"><span class="cp">TRUE</span></div>
<div class="c r" style="left:1070px;top:492px;width:61px">1</div>
<div class="c r" style="left:1132px;top:492px;width:61px">2</div>
<div class="c r" style="left:1194px;top:492px;width:61px">3</div>
<div class="c r" style="left:1256px;top:492px;width:61px">4</div>
<div class="c r" style="left:1318px;top:492px;width:61px">5</div>
<div class="c r" style="left:1380px;top:492px;width:61px">6</div>
<div class="c r" style="left:1442px;top:492px;width:61px">7</div>
<div class="c r" style="left:1504px;top:492px;width:61px">8</div>
<div class="c r" style="left:1566px;top:492px;width:61px">9</div>
<div class="c r" style="left:1628px;top:492px;width:61px">10</div>
<div class="c r" style="left:1690px;top:492px;width:61px">11</div>
<div class="c r" style="left:1752px;top:492px;width:61px">12</div>
<div class="c r" style="left:1814px;top:492px;width:61px">13</div>
<div class="c l" style="left:894px;top:509px;width:113px">First 10</div>
<div class="c l" style="left:894px;top:526px;width:113px">Second Period</div>
<div class="c m" style="left:1070px;top:509px;width:61px"><span class="cp">TRUE</span></div>
<div class="c m" style="left:1070px;top:526px;width:61px"><span class="cp">FALSE</span></div>
<div class="c m" style="left:1132px;top:509px;width:61px"><span class="cp">TRUE</span></div>
<div class="c m" style="left:1132px;top:526px;width:61px"><span class="cp">FALSE</span></div>
<div class="c m" style="left:1194px;top:509px;width:61px"><span class="cp">TRUE</span></div>
<div class="c m" style="left:1194px;top:526px;width:61px"><span class="cp">FALSE</span></div>
<div class="c m" style="left:1256px;top:509px;width:61px"><span class="cp">TRUE</span></div>
<div class="c m" style="left:1256px;top:526px;width:61px"><span class="cp">FALSE</span></div>
<div class="c m" style="left:1318px;top:509px;width:61px"><span class="cp">TRUE</span></div>
<div class="c m" style="left:1318px;top:526px;width:61px"><span class="cp">FALSE</span></div>
<div class="c m" style="left:1380px;top:509px;width:61px"><span class="cp">TRUE</span></div>
<div class="c m" style="left:1380px;top:526px;width:61px"><span class="cp">FALSE</span></div>
<div class="c m" style="left:1442px;top:509px;width:61px"><span class="cp">TRUE</span></div>
<div class="c m" style="left:1442px;top:526px;width:61px"><span class="cp">FALSE</span></div>
<div class="c m" style="left:1504px;top:509px;width:61px"><span class="cp">TRUE</span></div>
<div class="c m" style="left:1504px;top:526px;width:61px"><span class="cp">FALSE</span></div>
<div class="c m" style="left:1566px;top:509px;width:61px"><span class="cp">TRUE</span></div>
<div class="c m" style="left:1566px;top:526px;width:61px"><span class="cp">FALSE</span></div>
<div class="c m" style="left:1628px;top:509px;width:61px"><span class="cp">TRUE</span></div>
<div class="c m" style="left:1628px;top:526px;width:61px"><span class="cp">FALSE</span></div>
<div class="c m" style="left:1690px;top:509px;width:61px"><span class="cp">FALSE</span></div>
<div class="c m" style="left:1690px;top:526px;width:61px"><span class="cp">TRUE</span></div>
<div class="c m" style="left:1752px;top:509px;width:61px"><span class="cp">FALSE</span></div>
<div class="c m" style="left:1752px;top:526px;width:61px"><span class="cp">TRUE</span></div>
<div class="c m" style="left:1814px;top:509px;width:61px"><span class="cp">FALSE</span></div>
<div class="c m" style="left:1814px;top:526px;width:61px"><span class="cp">TRUE</span></div>
<div class="c m" style="left:1876px;top:509px;width:61px"><span class="cp">FALSE</span></div>
<div class="c m" style="left:1876px;top:526px;width:61px"><span class="cp">TRUE</span></div>
<div class="c l" style="left:894px;top:407px;width:113px">Percent in First 10</div>
<div class="c r" style="left:1008px;top:407px;width:61px">100%</div>
<div class="c l" style="left:894px;top:424px;width:113px">Percent in Remaining</div>
<div class="c r" style="left:1008px;top:424px;width:61px">100%</div>
<div class="c l" style="left:894px;top:441px;width:113px">Total Cap Charge</div>
<div class="c l" style="left:894px;top:458px;width:113px">NPV</div>
<div class="c r" style="left:1008px;top:458px;width:61px">10%</div>
<div class="c r" style="left:1070px;top:458px;width:61px">698,93</div>
<div class="c r" style="left:1070px;top:407px;width:61px">77</div>
<div class="c r" style="left:1070px;top:424px;width:61px">0</div>
<div class="c r" style="left:1070px;top:441px;width:61px">77</div>
<div class="c r" style="left:1132px;top:407px;width:61px">77</div>
<div class="c r" style="left:1132px;top:424px;width:61px">0</div>
<div class="c r" style="left:1132px;top:441px;width:61px">77</div>
<div class="c r" style="left:1194px;top:407px;width:61px">77</div>
<div class="c r" style="left:1194px;top:424px;width:61px">0</div>
<div class="c r" style="left:1194px;top:441px;width:61px">77</div>
<div class="c r" style="left:1256px;top:407px;width:61px">77</div>
<div class="c r" style="left:1256px;top:424px;width:61px">0</div>
<div class="c r" style="left:1256px;top:441px;width:61px">77</div>
<div class="c r" style="left:1318px;top:407px;width:61px">77</div>
<div class="c r" style="left:1318px;top:424px;width:61px">0</div>
<div class="c r" style="left:1318px;top:441px;width:61px">77</div>
<div class="c r" style="left:1380px;top:407px;width:61px">77</div>
<div class="c r" style="left:1380px;top:424px;width:61px">0</div>
<div class="c r" style="left:1380px;top:441px;width:61px">77</div>
<div class="c r" style="left:1442px;top:407px;width:61px">77</div>
<div class="c r" style="left:1442px;top:424px;width:61px">0</div>
<div class="c r" style="left:1442px;top:441px;width:61px">77</div>
<div class="c r" style="left:1504px;top:407px;width:61px">77</div>
<div class="c r" style="left:1504px;top:424px;width:61px">0</div>
<div class="c r" style="left:1504px;top:441px;width:61px">77</div>
<div class="c r" style="left:1566px;top:407px;width:61px">77</div>
<div class="c r" style="left:1566px;top:424px;width:61px">0</div>
<div class="c r" style="left:1566px;top:441px;width:61px">77</div>
<div class="c r" style="left:1628px;top:407px;width:61px">77</div>
<div class="c r" style="left:1628px;top:424px;width:61px">0</div>
<div class="c r" style="left:1628px;top:441px;width:61px">77</div>
<div class="c r" style="left:1690px;top:407px;width:61px">0</div>
<div class="c r" style="left:1690px;top:424px;width:61px">77</div>
<div class="c r" style="left:1690px;top:441px;width:61px">77</div>
<div class="c r" style="left:1752px;top:407px;width:61px">0</div>
<div class="c r" style="left:1752px;top:424px;width:61px">77</div>
<div class="c r" style="left:1752px;top:441px;width:61px">77</div>
<div class="c r" style="left:1814px;top:407px;width:61px">0</div>
<div class="c r" style="left:1814px;top:424px;width:61px">77</div>
<div class="c r" style="left:1814px;top:441px;width:61px">77</div>
<div class="c l" style="left:894px;top:543px;width:113px">Percent in First 10</div>
<div class="c r" style="left:1008px;top:543px;width:61px">130%</div>
<div class="c l" style="left:894px;top:560px;width:113px">Percent in Remaining</div>
<div class="c r" style="left:1008px;top:560px;width:61px">37%</div>
<div class="c l" style="left:894px;top:577px;width:113px">Total Rate</div>
<div class="c r" style="left:1070px;top:543px;width:61px">100,1</div>
<div class="c r" style="left:1070px;top:560px;width:61px">0</div>
<div class="c r" style="left:1070px;top:577px;width:61px">100,1</div>
<div class="c r" style="left:1132px;top:543px;width:61px">100,1</div>
<div class="c r" style="left:1132px;top:560px;width:61px">0</div>
<div class="c r" style="left:1132px;top:577px;width:61px">100,1</div>
<div class="c r" style="left:1194px;top:543px;width:61px">100,1</div>
<div class="c r" style="left:1194px;top:560px;width:61px">0</div>
<div class="c r" style="left:1194px;top:577px;width:61px">100,1</div>
<div class="c r" style="left:1256px;top:543px;width:61px">100,1</div>
<div class="c r" style="left:1256px;top:560px;width:61px">0</div>
<div class="c r" style="left:1256px;top:577px;width:61px">100,1</div>
<div class="c r" style="left:1318px;top:543px;width:61px">100,1</div>
<div class="c r" style="left:1318px;top:560px;width:61px">0</div>
<div class="c r" style="left:1318px;top:577px;width:61px">100,1</div>
<div class="c r" style="left:1380px;top:543px;width:61px">100,1</div>
<div class="c r" style="left:1380px;top:560px;width:61px">0</div>
<div class="c r" style="left:1380px;top:577px;width:61px">100,1</div>
<div class="c r" style="left:1442px;top:543px;width:61px">100,1</div>
<div class="c r" style="left:1442px;top:560px;width:61px">0</div>
<div class="c r" style="left:1442px;top:577px;width:61px">100,1</div>
<div class="c r" style="left:1504px;top:543px;width:61px">100,1</div>
<div class="c r" style="left:1504px;top:560px;width:61px">0</div>
<div class="c r" style="left:1504px;top:577px;width:61px">100,1</div>
<div class="c r" style="left:1566px;top:543px;width:61px">100,1</div>
<div class="c r" style="left:1566px;top:560px;width:61px">0</div>
<div class="c r" style="left:1566px;top:577px;width:61px">100,1</div>
<div class="c r" style="left:1628px;top:543px;width:61px">100,1</div>
<div class="c r" style="left:1628px;top:560px;width:61px">0</div>
<div class="c r" style="left:1628px;top:577px;width:61px">100,1</div>
<div class="c r" style="left:1690px;top:543px;width:61px">0</div>
<div class="c r" style="left:1690px;top:560px;width:61px">28,59734</div>
<div class="c r" style="left:1690px;top:577px;width:61px">28,59734</div>
<div class="c r" style="left:1752px;top:543px;width:61px">0</div>
<div class="c r" style="left:1752px;top:560px;width:61px">28,59734</div>
<div class="c r" style="left:1752px;top:577px;width:61px">28,59734</div>
<div class="c r" style="left:1814px;top:543px;width:61px">0</div>
<div class="c r" style="left:1814px;top:560px;width:61px">28,59734</div>
<div class="c r" style="left:1814px;top:577px;width:61px">28,59734</div>
<div class="c r" style="left:1876px;top:543px;width:61px">0</div>
<div class="c r" style="left:1876px;top:560px;width:61px">28,59734</div>
<div class="c r" style="left:1876px;top:577px;width:61px">28,59734</div>
<div class="c l" style="left:894px;top:611px;width:113px">NPV</div>
<div class="c r" style="left:1008px;top:611px;width:61px">10%</div>
<div class="c r" style="left:1070px;top:611px;width:61px">698,93</div>
<div class="c r" style="left:1690px;top:611px;width:61px">0,371394</div>
<div class="c l" style="left:894px;top:628px;width:113px">Difference</div>
<div class="c r" style="left:1070px;top:628px;width:61px">0,00</div>
<div class="c l" style="left:1132px;top:628px;overflow:visible">NPV Diff</div>
<div class="a" style="left:1208px;top:316px;width:103px;height:25px;background:#efefef;border-right:2px solid #5e5e5e;border-bottom:2px solid #5e5e5e;font-size:12.5px;letter-spacing:0.5px;line-height:26px;text-align:center;color:#111">Button 1</div>
<div class="a" style="left:1564px;top:627px;width:65px;height:20px;border:3px solid #000"></div>
<div class="a" style="left:1624px;top:642px;width:7px;height:7px;background:#000;border:1px solid #fff"></div>
<div class="a" style="left:1900px;top:31px;width:20px;height:836px;background:#e9ebee;border-left:1px solid #c9ccd1"></div>
<div class="a" style="left:1902px;top:31px;width:14px;height:8px;background:#fff;border:1px solid #8c9198"></div>
<div class="a" style="left:1905px;top:34px;width:8px;height:1px;background:#8c9198"></div>
<div class="a" style="left:1905px;top:44px;width:0;height:0;border-left:5px solid transparent;border-right:5px solid transparent;border-bottom:5px solid #333"></div>
<div class="a" style="left:1900px;top:56px;width:15px;height:778px;background:linear-gradient(90deg,#fdfdfe,#e4e6ea 60%,#d9dce1);border:1px solid #8f959c;border-radius:2px"></div>
<div class="a" style="left:1904px;top:442px;width:8px;height:1px;background:#7f848b"></div>
<div class="a" style="left:1904px;top:444px;width:8px;height:1px;background:#7f848b"></div>
<div class="a" style="left:1904px;top:446px;width:8px;height:1px;background:#7f848b"></div>
<div class="a" style="left:1904px;top:448px;width:8px;height:1px;background:#7f848b"></div>
<div class="a" style="left:1905px;top:858px;width:0;height:0;border-left:5px solid transparent;border-right:5px solid transparent;border-top:5px solid #333"></div>
<div class="a" style="left:1916px;top:31px;width:1px;height:836px;background:#b5b9bf"></div>
<div class="a" style="left:0;top:867px;width:1920px;height:2px;background:#fff"></div>
<div class="a" style="left:0;top:869px;width:1920px;height:16px;background:linear-gradient(#dfe2e7,#eceef1)"></div>
<div class="a" style="left:0;top:869px;width:1900px;height:1px;background:#9ea3aa"></div>
<div class="a" style="left:0;top:884px;width:1920px;height:2px;background:#a6aab0"></div>
<div class="a" style="left:62px;top:869px;width:1px;height:16px;background:#9ea3aa"></div>
<svg class="a" style="left:0;top:870px" width="62" height="14"><rect x="6" y="3" width="1.5" height="8" fill="#333"/><path d="M8 7 L12.5 3 L12.5 11 Z" fill="#333"/><path d="M21 7 L25.5 3 L25.5 11 Z" fill="#333"/><path d="M40 7 L35.5 3 L35.5 11 Z" fill="#333"/><path d="M54 7 L49.5 3 L49.5 11 Z" fill="#333"/><rect x="54.5" y="3" width="1.5" height="8" fill="#333"/></svg>
<svg class="a" style="left:0;top:869px" width="1150" height="17"><defs><linearGradient id="g2" x1="0" y1="0" x2="0" y2="1"><stop offset="0" stop-color="#2f34c4"/><stop offset="1" stop-color="#6468dc"/></linearGradient><linearGradient id="g3" x1="0" y1="0" x2="0" y2="1"><stop offset="0" stop-color="#5a0f52"/><stop offset="1" stop-color="#98428f"/></linearGradient><linearGradient id="g4" x1="0" y1="0" x2="0" y2="1"><stop offset="0" stop-color="#c00ae4"/><stop offset="1" stop-color="#e050f8"/></linearGradient><linearGradient id="g5" x1="0" y1="0" x2="0" y2="1"><stop offset="0" stop-color="#e6004e"/><stop offset="1" stop-color="#f5558c"/></linearGradient><linearGradient id="g6" x1="0" y1="0" x2="0" y2="1"><stop offset="0" stop-color="#38391a"/><stop offset="1" stop-color="#6c6e44"/></linearGradient><linearGradient id="g7" x1="0" y1="0" x2="0" y2="1"><stop offset="0" stop-color="#0f3064"/><stop offset="1" stop-color="#43679c"/></linearGradient></defs><path d="M67 15.5 L83 0.5" stroke="#6f747b" stroke-width="1" fill="none"/><path d="M220 15.5 L232 0.5" stroke="#6f747b" stroke-width="1" fill="none"/><path d="M362 14.5 L369 1.5 L449 1.5 L439 14.5 Z" fill="url(#g2)" stroke="#f6eefa" stroke-width="1.2"/><path d="M444 14.5 L452 1.5 L526 1.5 L516 14.5 Z" fill="url(#g3)" stroke="#f6eefa" stroke-width="1.2"/><path d="M521 14.5 L528 1.5 L724 1.5 L714 14.5 Z" fill="url(#g4)" stroke="#f6eefa" stroke-width="1.2"/><path d="M719 14.5 L727 1.5 L892 1.5 L882 14.5 Z" fill="url(#g5)" stroke="#f6eefa" stroke-width="1.2"/><path d="M886 14.5 L894 1.5 L1035 1.5 L1035 14.5 Z" fill="url(#g6)" stroke="#f6eefa" stroke-width="1.2"/><path d="M1079 14.5 L1087 1.5 L1141 1.5 L1141 14.5 Z" fill="url(#g7)" stroke="#f6eefa" stroke-width="1.2"/><path d="M1035 0 L1083 0 L1075 16 L1035 16 Z" fill="#fbfbfd"/><path d="M1036 15 L1074 15" stroke="#c9c6e6" stroke-width="2"/></svg>
<div class="tt" style="left:89px;color:#444;letter-spacing:-0.297px">Gas Resources in Lake</div>
<div class="tt" style="left:238px;color:#444;letter-spacing:-0.036px">BACK-UP DATA ---&gt;</div>
<div class="tt" style="left:373px;color:#fff;letter-spacing:0.227px">Info Memo</div>
<div class="tt" style="left:456px;color:#fff;letter-spacing:-0.319px">Clip of FM</div>
<div class="tt" style="left:538px;color:#fff;letter-spacing:-0.074px">Full Budget Cap Exp Summary</div>
<div class="tt" style="left:735px;color:#fff;letter-spacing:0.109px">14 MW Equipment Costs</div>
<div class="tt" style="left:903px;color:#f2f0c8;letter-spacing:0.114px">Monthly Construction</div>
<div class="tt" style="left:1096px;color:#fff;letter-spacing:-0.1px">Gas Ana</div>
<div class="tt" style="left:1045px;color:#111;font-weight:bold;letter-spacing:0.23px">PPA</div>
<div class="a" style="left:1141px;top:870px;width:7px;height:14px;background:#fff;border:1px solid #8a8f96"></div>
<div class="a" style="left:1144px;top:873px;width:1px;height:8px;background:#777"></div>
<div class="a" style="left:1148px;top:870px;width:17px;height:14px;background:#e3e6ea"></div>
<div class="a" style="left:1153px;top:873px;width:0;height:0;border-top:4px solid transparent;border-bottom:4px solid transparent;border-right:5px solid #444"></div>
<div class="a" style="left:1165px;top:870px;width:503px;height:14px;background:linear-gradient(#fdfdfe,#e6e8ec 55%,#dcdfe4);border:1px solid #959aa1;border-radius:2px"></div>
<div class="a" style="left:1413px;top:874px;width:1px;height:6px;background:#777"></div>
<div class="a" style="left:1415px;top:874px;width:1px;height:6px;background:#777"></div>
<div class="a" style="left:1417px;top:874px;width:1px;height:6px;background:#777"></div>
<div class="a" style="left:1881px;top:873px;width:0;height:0;border-top:4px solid transparent;border-bottom:4px solid transparent;border-left:5px solid #444"></div>
<div class="a" style="left:1892px;top:870px;width:8px;height:14px;background:#fff;border:1px solid #8a8f96"></div>
<div class="a" style="left:1895px;top:873px;width:1px;height:8px;background:#777"></div>
<div class="a" style="left:1900px;top:867px;width:20px;height:18px;background:#e6e9ed;border-left:1px solid #c5c9ce"></div>
<div class="a" style="left:0;top:886px;width:1920px;height:21px;background:linear-gradient(#e9ebee,#d2d5da 50%,#c3c7cd 85%,#cdd0d4)"></div>
<div class="a" style="left:0;top:907px;width:1920px;height:2px;background:#000"></div>
<div class="a" style="left:48px;top:907px;width:344px;height:1px;background:#bbbec2"></div>
<div class="a" style="left:48px;top:908px;width:344px;height:1px;background:#f4f4f4"></div>
<div class="a" style="left:8px;top:887px;height:19px;line-height:19px;font-size:11.5px;color:#333;letter-spacing:-0.7px">Ready</div>
<div class="a" style="left:48px;top:887px;width:1px;height:19px;background:#a5a9af"></div>
<div class="a" style="left:1678px;top:887px;width:1px;height:19px;background:#a5a9af"></div>
<div class="a" style="left:1683px;top:887px;width:19px;height:18px;background:linear-gradient(#fde9a0,#fbd970);border:1px solid #e3b95a;border-radius:2px"></div>
<svg class="a" style="left:1686px;top:890px" width="14" height="12"><rect x="0.5" y="0.5" width="13" height="11" fill="#fff" stroke="#555"/><path d="M0 4.5H14M0 8H14M4.8 0V12M9.2 0V12" stroke="#555" stroke-width="1.4"/></svg>
<svg class="a" style="left:1704px;top:890px" width="15" height="12"><rect x="0.5" y="0.5" width="14" height="11" fill="#ccc" stroke="#666"/><rect x="3.5" y="2.5" width="8" height="7" fill="#fff" stroke="#777"/></svg>
<svg class="a" style="left:1723px;top:890px" width="14" height="12"><rect x="0.5" y="0.5" width="13" height="11" fill="#bbb" stroke="#666"/><rect x="1.5" y="1.5" width="4" height="6" fill="#fff"/><rect x="7" y="1.5" width="3" height="5" fill="#fff"/></svg>
<div class="a" style="left:1750px;top:887px;height:19px;line-height:19px;font-size:11.5px;color:#333;letter-spacing:-1px">100%</div>
<svg class="a" style="left:1782px;top:886px" width="138" height="21"><circle cx="9.5" cy="10" r="7.5" fill="#f4f5f7" stroke="#8e939a"/><rect x="5.5" y="9" width="8" height="2" fill="#333"/><rect x="18" y="9.5" width="100" height="1" fill="#a5a9af"/><path d="M64.5 3.5 H72.5 V12 L68.5 15.5 L64.5 12 Z" fill="#fafafa" stroke="#7f848b"/><circle cx="125.5" cy="10" r="7.5" fill="#f4f5f7" stroke="#8e939a"/><rect x="121.5" y="9" width="8" height="2" fill="#333"/><rect x="124.5" y="6" width="2" height="8" fill="#333"/></svg></body></html>
